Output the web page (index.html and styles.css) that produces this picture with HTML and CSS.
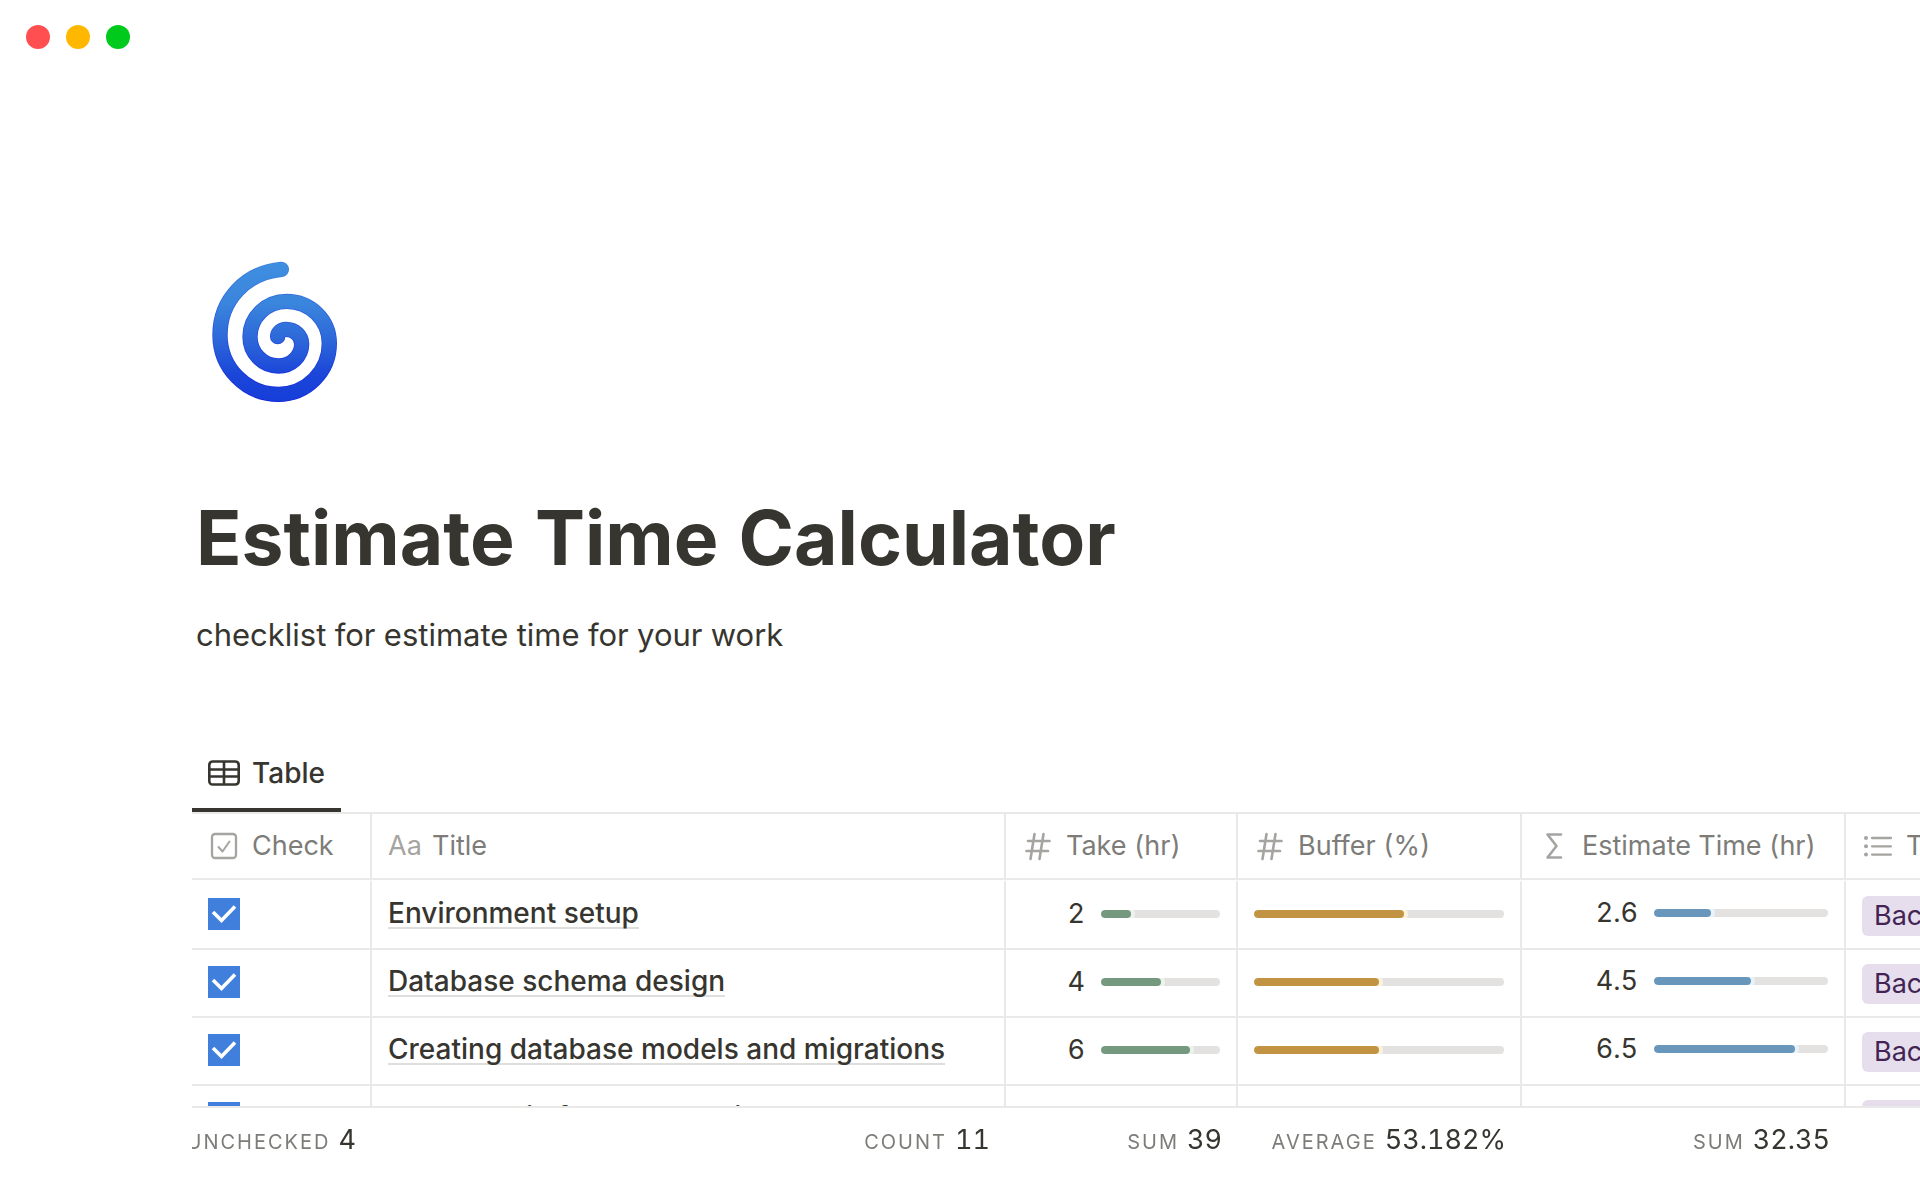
FILE: index.html
```html
<!DOCTYPE html>
<html lang="en">
<head>
<meta charset="utf-8">
<meta name="viewport" content="width=device-width, initial-scale=1">
<title>Estimate Time Calculator</title>
<link rel="stylesheet" href="styles.css">
</head>
<body>
<svg class="sprite" aria-hidden="true">
  <symbol id="icon-number" viewBox="0 0 32 32">
    <path d="M12.500 4 8.500 29M21.500 4 17.500 29M6 11H27.500M4.500 21H26" fill="none" stroke="currentColor" stroke-width="2.600" stroke-linecap="round"/>
  </symbol>
</svg>
<div class="window">
  <header class="titlebar" aria-label="Window controls">
    <button class="dot dot-close" type="button" aria-label="Close"></button>
    <button class="dot dot-minimize" type="button" aria-label="Minimize"></button>
    <button class="dot dot-zoom" type="button" aria-label="Zoom"></button>
  </header>

  <main class="page">
    <div class="intro">
      <svg class="page-icon" viewBox="48 39 468 468" role="img" aria-label="Spiral">
        <defs>
          <linearGradient id="swirl" gradientUnits="userSpaceOnUse" x1="0" y1="64" x2="0" y2="487">
            <stop offset="0" stop-color="#3f8fe0"/>
            <stop offset="0.300" stop-color="#3a85dd"/>
            <stop offset="0.550" stop-color="#2d68d9"/>
            <stop offset="0.800" stop-color="#1b46d9"/>
            <stop offset="1" stop-color="#163dd9"/>
          </linearGradient>
          <linearGradient id="swirl-edge" gradientUnits="userSpaceOnUse" x1="0" y1="64" x2="0" y2="487">
            <stop offset="0" stop-color="#3d84dc"/>
            <stop offset="1" stop-color="#1020dc"/>
          </linearGradient>
          <path id="swirl-line" d="M304 88C198 98 120 180 120 285A175 178 0 0 0 295 463A153 153 0 0 0 448 310A128 126 0 0 0 320 184A110 106 0 0 0 210 290A85 88 0 0 0 295 378A70 66 0 0 0 365 312A47 44 0 0 0 318 268A25 22 0 0 0 293 290"/>
        </defs>
        <g fill="none" stroke-linecap="round">
          <use href="#swirl-line" stroke="url(#swirl-edge)" stroke-width="46"/>
          <use href="#swirl-line" stroke="url(#swirl)" stroke-width="41"/>
        </g>
      </svg>
      <h1 class="page-title">Estimate Time Calculator</h1>
      <p class="page-description">checklist for estimate time for your work</p>
    </div>

    <nav class="views" aria-label="Views">
      <button class="view-tab" type="button" aria-current="true">
        <svg class="icon" viewBox="0 0 32 32" aria-hidden="true">
          <path d="M5 4.500H27Q30.700 4.500 30.700 8V24Q30.700 27.500 27 27.500H5Q1.300 27.500 1.300 24V8Q1.300 4.500 5 4.500ZM1.300 12.500H30.700M1.300 19.500H30.700M16 4.500V27.500" fill="none" stroke="currentColor" stroke-width="2.600"/>
        </svg>
        <span>Table</span>
      </button>
    </nav>

    <div class="table-scroll">
      <table class="data">
        <colgroup>
          <col class="col-check"><col class="col-title"><col class="col-take"><col class="col-buffer"><col class="col-estimate"><col>
        </colgroup>
        <thead>
          <tr>
            <th scope="col"><div class="head"><svg class="icon" viewBox="0 0 32 32" aria-hidden="true"><rect x="4" y="4" width="24" height="24" rx="3" fill="none" stroke="currentColor" stroke-width="2.300"/><path d="M10.500 17 14.500 21.500 21.500 11.500" fill="none" stroke="currentColor" stroke-width="2" stroke-linecap="round" stroke-linejoin="round"/></svg><span>Check</span></div></th>
            <th scope="col"><div class="head"><span class="icon icon-text" aria-hidden="true">Aa</span><span>Title</span></div></th>
            <th scope="col"><div class="head"><svg class="icon" aria-hidden="true"><use href="#icon-number"/></svg><span>Take (hr)</span></div></th>
            <th scope="col"><div class="head"><svg class="icon" aria-hidden="true"><use href="#icon-number"/></svg><span>Buffer (%)</span></div></th>
            <th scope="col"><div class="head"><svg class="icon" viewBox="0 0 32 32" aria-hidden="true"><path d="M23 4.500H9.500L18.500 16 9.500 27.500H23" fill="none" stroke="currentColor" stroke-width="2.600" stroke-linecap="round" stroke-linejoin="round"/></svg><span>Estimate Time (hr)</span></div></th>
            <th scope="col"><div class="head"><svg class="icon" viewBox="0 0 32 32" aria-hidden="true"><g fill="currentColor"><circle cx="4" cy="8" r="2"/><circle cx="4" cy="16.300" r="2"/><circle cx="4" cy="24.600" r="2"/></g><path d="M10 8H29M10 16.300H29M10 24.600H29" stroke="currentColor" stroke-width="2.300" stroke-linecap="round"/></svg><span>Type</span></div></th>
          </tr>
        </thead>
        <tbody>
          <tr>
            <td><input class="check" type="checkbox" checked aria-label="Environment setup"></td>
            <td><a class="row-title" href="#environment">Environment setup</a></td>
            <td><div class="meter take"><span>2</span><span class="track"><span class="fill" style="width:25%"></span></span></div></td>
            <td><div class="meter buffer"><span class="track"><span class="fill" style="width:60%"></span></span></div></td>
            <td><div class="meter estimate"><span>2.6</span><span class="track"><span class="fill" style="width:33%"></span></span></div></td>
            <td><span class="tag">Backend</span></td>
          </tr>
          <tr>
            <td><input class="check" type="checkbox" checked aria-label="Database schema design"></td>
            <td><a class="row-title" href="#schema">Database schema design</a></td>
            <td><div class="meter take"><span>4</span><span class="track"><span class="fill" style="width:50%"></span></span></div></td>
            <td><div class="meter buffer"><span class="track"><span class="fill" style="width:50%"></span></span></div></td>
            <td><div class="meter estimate"><span>4.5</span><span class="track"><span class="fill" style="width:56%"></span></span></div></td>
            <td><span class="tag">Backend</span></td>
          </tr>
          <tr>
            <td><input class="check" type="checkbox" checked aria-label="Creating database models and migrations"></td>
            <td><a class="row-title" href="#models">Creating database models and migrations</a></td>
            <td><div class="meter take"><span>6</span><span class="track"><span class="fill" style="width:75%"></span></span></div></td>
            <td><div class="meter buffer"><span class="track"><span class="fill" style="width:50%"></span></span></div></td>
            <td><div class="meter estimate"><span>6.5</span><span class="track"><span class="fill" style="width:81%"></span></span></div></td>
            <td><span class="tag">Backend</span></td>
          </tr>
          <tr>
            <td><input class="check" type="checkbox" checked aria-label="Create login form and design"></td>
            <td><a class="row-title" href="#login">Create login form and design</a></td>
            <td></td>
            <td></td>
            <td></td>
            <td><span class="tag">Backend</span></td>
          </tr>
        </tbody>
        <tfoot>
          <tr>
            <td><div class="total"><span class="total-label">Unchecked</span><span>4</span></div></td>
            <td><div class="total"><span class="total-label">Count</span><span>11</span></div></td>
            <td><div class="total"><span class="total-label">Sum</span><span>39</span></div></td>
            <td><div class="total"><span class="total-label">Average</span><span>53.182%</span></div></td>
            <td><div class="total"><span class="total-label">Sum</span><span>32.35</span></div></td>
            <td></td>
          </tr>
        </tfoot>
      </table>
    </div>
  </main>
</div>
</body>
</html>
```
FILE: styles.css
```css
:root {
  --ink: #37352f;
  --muted: #7d7c78;
  --faint: #a5a4a1;
  --line: #e9e9e8;
  --track: #e3e2e0;
}

* { box-sizing: border-box; }

body {
  margin: 0;
  background: #fff;
  color: var(--ink);
  font-family: Inter, "Liberation Sans", sans-serif;
  font-size: 27px;
  font-variant-numeric: tabular-nums;
  line-height: 40px;
}

button {
  border: 0;
  padding: 0;
  background: none;
  color: inherit;
  font: inherit;
}

.sprite {
  display: block;
  width: 0;
  height: 0;
}

.window {
  display: flex;
  flex-direction: column;
  height: 100vh;
  overflow: hidden;
}

.titlebar {
  display: flex;
  gap: 16px;
  padding: 25px 26px;
}

.dot {
  width: 24px;
  height: 24px;
  border-radius: 50%;
}

.dot-close { background: #ff4f50; }
.dot-minimize { background: #ffb700; }
.dot-zoom { background: #00ca1b; }

.page {
  display: flex;
  flex: 1;
  flex-direction: column;
  min-height: 0;
  padding-left: 192px;
}

.intro { padding: 179px 4px 0; }

.page-icon {
  display: block;
  width: 156px;
  height: 156px;
}

.page-title {
  margin: 81px 0 25px;
  font-size: 75px;
  font-weight: 700;
  line-height: 96px;
}

.page-description {
  margin: 0;
  font-size: 31px;
  line-height: 48px;
}

.views {
  display: flex;
  margin-top: 90px;
}

.view-tab {
  display: flex;
  align-items: center;
  gap: 12px;
  height: 63px;
  padding: 0 16px 11px;
  border-bottom: 4px solid var(--ink);
  font-size: 28px;
  font-weight: 500;
}

.icon {
  flex: none;
  width: 32px;
  height: 32px;
}

.table-scroll {
  flex: 1;
  min-height: 0;
  overflow: hidden;
}

.data {
  width: calc(100% + 200px);
  border-top: 2px solid var(--line);
  border-spacing: 0;
  table-layout: fixed;
}

.col-check { width: 180px; }
.col-title { width: 634px; }
.col-take { width: 232px; }
.col-buffer { width: 284px; }
.col-estimate { width: 324px; }

.data th,
.data td {
  height: 68px;
  padding: 0 16px 2px;
  border-right: 2px solid var(--line);
  border-bottom: 2px solid var(--line);
  text-align: left;
  white-space: nowrap;
}

.data th {
  height: 66px;
  padding-bottom: 0;
  color: var(--muted);
  font-weight: 400;
}

.data td:last-child { padding-bottom: 0; }

.data tbody tr:first-child td {
  height: 70px;
  border-top: 2px solid #fff;
}

.head {
  display: flex;
  align-items: center;
  gap: 12px;
}

.head .icon { color: var(--faint); }

.head .icon-text { height: auto; }

.check {
  display: block;
  width: 32px;
  height: 32px;
  margin: 0;
  appearance: none;
  background: #407fdb;
}

.check:checked {
  background-image: url("data:image/svg+xml,%3Csvg xmlns='http://www.w3.org/2000/svg' viewBox='0 0 32 32'%3E%3Cpath d='M5 14 13.500 22.500 27 8.500' fill='none' stroke='%23fff' stroke-width='3.600'/%3E%3C/svg%3E");
}

.row-title {
  display: inline-block;
  border-bottom: 2px solid #dededc;
  color: inherit;
  font-size: 28px;
  font-weight: 500;
  line-height: 28px;
  text-decoration: none;
}

.meter {
  display: flex;
  align-items: center;
  justify-content: flex-end;
  gap: 16px;
}

.track {
  width: 119px;
  height: 8px;
  overflow: hidden;
  border-radius: 4px;
  background: var(--track);
}

.fill {
  display: block;
  height: 100%;
  border-radius: 4px;
}

.take .fill {
  background: #75997e;
  box-shadow: 0 0 0 4px #edf3ec;
}

.buffer .track { flex: 1; }

.buffer .fill {
  background: #c29343;
  box-shadow: 0 0 0 4px #fbf3db;
}

.estimate { padding-bottom: 2px; }

.estimate .track { width: 174px; }

.estimate .fill {
  background: #6996bb;
  box-shadow: 0 0 0 4px #e7f3f8;
}

.tag {
  display: inline-block;
  padding: 0 12px;
  border-radius: 6px;
  background: #e6deed;
  color: #412454;
  vertical-align: middle;
}

.data tfoot {
  position: sticky;
  bottom: 0;
}

.data tfoot td {
  height: 94px;
  padding: 0 16px 26px;
  border-top: 2px solid var(--line);
  border-right: 0;
  border-bottom: 0;
  background: #fff;
}

.total {
  display: flex;
  align-items: baseline;
  justify-content: flex-end;
  gap: 8px;
}

.total-label {
  color: var(--muted);
  font-size: 20px;
  letter-spacing: 2px;
  text-transform: uppercase;
}
```
